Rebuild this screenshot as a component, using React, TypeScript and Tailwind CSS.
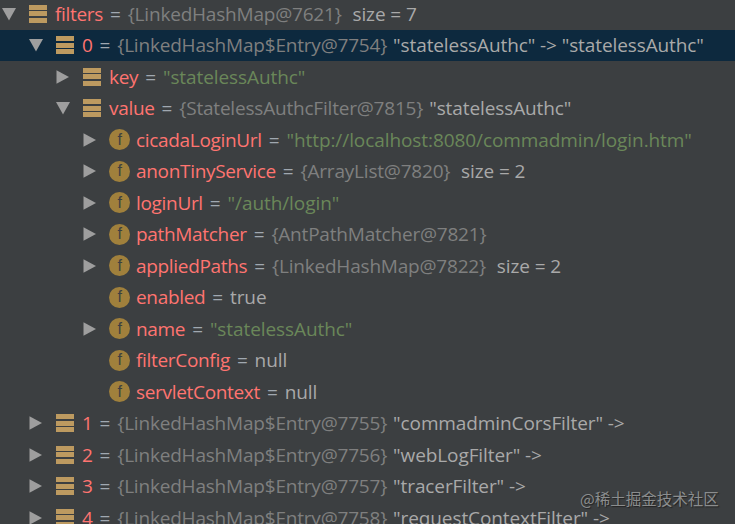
import React from "react";

type Seg = [string, string];
type Row = { level: number; arrow: "down" | "right" | "none"; icon: "stack" | "f"; name: string; segs: Seg[]; selected?: boolean };

const OBJ = "text-[#7f7f7f]";
const STR = "text-[#6a8759] tracking-[-0.08px]";
const LBL = "text-[#a9a9a9] tracking-[-0.1px]";
const EQ = "text-[#a0a8b0]";

const rows: Row[] = [
  { level: 0, arrow: "down", icon: "stack", name: "filters", segs: [["{LinkedHashMap@7621}", OBJ], [" size = 7", LBL]] },
  { level: 1, arrow: "down", icon: "stack", name: "0", selected: true, segs: [["{LinkedHashMap$Entry@7754}", OBJ], ['"statelessAuthc" -> "statelessAuthc"', LBL]] },
  { level: 2, arrow: "right", icon: "stack", name: "key", segs: [['"statelessAuthc"', STR]] },
  { level: 2, arrow: "down", icon: "stack", name: "value", segs: [["{StatelessAuthcFilter@7815}", OBJ], ['"statelessAuthc"', LBL]] },
  { level: 3, arrow: "right", icon: "f", name: "cicadaLoginUrl", segs: [['"http://localhost:8080/commadmin/login.htm"', STR]] },
  { level: 3, arrow: "right", icon: "f", name: "anonTinyService", segs: [["{ArrayList@7820}", OBJ], [" size = 2", LBL]] },
  { level: 3, arrow: "right", icon: "f", name: "loginUrl", segs: [['"/auth/login"', STR]] },
  { level: 3, arrow: "right", icon: "f", name: "pathMatcher", segs: [["{AntPathMatcher@7821}", OBJ]] },
  { level: 3, arrow: "right", icon: "f", name: "appliedPaths", segs: [["{LinkedHashMap@7822}", OBJ], [" size = 2", LBL]] },
  { level: 3, arrow: "none", icon: "f", name: "enabled", segs: [["true", LBL]] },
  { level: 3, arrow: "right", icon: "f", name: "name", segs: [['"statelessAuthc"', STR]] },
  { level: 3, arrow: "none", icon: "f", name: "filterConfig", segs: [["null", LBL]] },
  { level: 3, arrow: "none", icon: "f", name: "servletContext", segs: [["null", LBL]] },
  { level: 1, arrow: "right", icon: "stack", name: "1", segs: [["{LinkedHashMap$Entry@7755}", OBJ], ['"commadminCorsFilter" ->', LBL]] },
  { level: 1, arrow: "right", icon: "stack", name: "2", segs: [["{LinkedHashMap$Entry@7756}", OBJ], ['"webLogFilter" ->', LBL]] },
  { level: 1, arrow: "right", icon: "stack", name: "3", segs: [["{LinkedHashMap$Entry@7757}", OBJ], ['"tracerFilter" ->', LBL]] },
  { level: 1, arrow: "right", icon: "stack", name: "4", segs: [["{LinkedHashMap$Entry@7758}", OBJ], ['"requestContextFilter" ->', LBL]] },
];

const pad = ["pl-[2px]", "pl-[29px]", "pl-[56px]", "pl-[83px]"];

function Arrow({ kind }: { kind: Row["arrow"] }) {
  return (
    <span className="w-[14px] h-[14px] shrink-0 mr-[13px]">
      {kind === "down" && (
        <svg width="14" height="14" viewBox="0 0 14 14"><path d="M0 1h14L7 13.5z" fill="#9e9e9e" /></svg>
      )}
      {kind === "right" && (
        <svg width="14" height="14" viewBox="0 0 14 14"><path d="M0.5 0.3L13 7L0.5 13.7z" fill="#9e9e9e" /></svg>
      )}
    </span>
  );
}

function Icon({ kind }: { kind: Row["icon"] }) {
  if (kind === "f") {
    return (
      <span className="w-[21px] h-[21px] -ml-[1px] mr-[6px] shrink-0 rounded-full bg-[#a0803c] flex items-center justify-center text-[#3c3f41] text-[16px] leading-none font-['Liberation_Sans',sans-serif]">
        f
      </span>
    );
  }
  return (
    <span className="w-[18px] h-[18px] mr-[8px] shrink-0 flex flex-col justify-between">
      <span className="h-[5px] bg-[#bd9a60]" />
      <span className="h-[5px] bg-[#bd9a60]" />
      <span className="h-[5px] bg-[#bd9a60]" />
    </span>
  );
}

export default function App() {
  return (
    <div className="relative w-[735px] h-[524px] overflow-hidden bg-[#3c3f41] font-['Open_Sans','Noto_Sans',sans-serif] text-[19px] tracking-[-0.2px]">
      <div className="-mt-[2px] flex flex-col">
        {rows.map((r, i) => (
          <div
            key={i}
            className={`h-[31.5px] shrink-0 flex items-center whitespace-pre ${pad[r.level]} ${r.selected ? "bg-[#0d293e]" : ""}`}
          >
            <Arrow kind={r.arrow} />
            <Icon kind={r.icon} />
            <span className="text-[#ff7470] tracking-[-0.32px]">{r.name}</span>
            <span className={`${EQ} ml-[7px] mr-[7px]`}>=</span>
            {r.segs.map((s, j) => (
              <span key={j} className={`${s[1]} ${j > 0 ? "ml-[6px]" : ""}`}>
                {s[0]}
              </span>
            ))}
          </div>
        ))}
      </div>
      <div className="absolute left-[580px] top-[487px] text-[15.5px] tracking-normal text-[#8b8d8e] font-['Noto_Sans_CJK_SC',sans-serif] [text-shadow:1px_1px_1px_#222]">
        @稀土掘金技术社区
      </div>
    </div>
  );
}
